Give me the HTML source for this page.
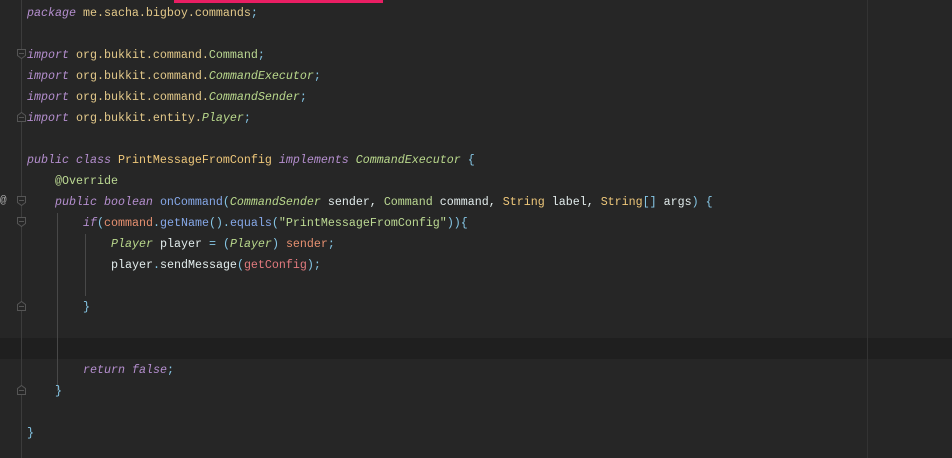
<!DOCTYPE html>
<html><head><style>
html,body{margin:0;padding:0;width:952px;height:458px;overflow:hidden;background:#262626;}
body{position:relative;font-family:"Liberation Mono",monospace;font-size:11.67px;color:#e2ecec;}
.l{position:absolute;left:27px;height:21px;line-height:21px;white-space:pre;margin-top:2px}
.k{color:#b58fcf;font-style:italic}
.c{color:#b9d88c;font-style:italic}
.p{color:#e3c98a}
.b{color:#86c7e6}
.m{color:#86a8e8}
.o{color:#e69070}
.s{color:#bcd993}
.r{color:#e27a7e}
.y{color:#eec77a}
.a{color:#bcd993}
.hl{position:absolute;left:0;top:338px;width:952px;height:21px;background:#1f1f1f}
.v{position:absolute;width:1px;background:#3c3c3c}
.f{position:absolute;left:17px;width:9px;height:10px}
</style></head><body>
<div style="position:absolute;left:174px;top:0;width:209px;height:3px;background:#e91e63"></div>
<div class="hl"></div>
<div class="v" style="left:21px;top:0;height:458px"></div>
<div class="v" style="left:867px;top:0;height:458px;background:#333"></div>
<div class="v" style="left:57px;top:213px;height:178px;background:#484848"></div>
<div class="v" style="left:85px;top:234px;height:62px;background:#484848"></div>
<svg class="f" style="top:49px" viewBox="0 0 9 10"><path d="M0.5 0.5H8.5V6.5L4.5 9.5L0.5 6.5Z M2 4.5H7" fill="#262626" stroke="#555"/></svg>
<svg class="f" style="top:112px" viewBox="0 0 9 10"><path d="M0.5 9.5H8.5V3.5L4.5 0.5L0.5 3.5Z M2 5.5H7" fill="#262626" stroke="#555"/></svg>
<svg class="f" style="top:196px" viewBox="0 0 9 10"><path d="M0.5 0.5H8.5V6.5L4.5 9.5L0.5 6.5Z M2 4.5H7" fill="#262626" stroke="#555"/></svg>
<svg class="f" style="top:217px" viewBox="0 0 9 10"><path d="M0.5 0.5H8.5V6.5L4.5 9.5L0.5 6.5Z M2 4.5H7" fill="#262626" stroke="#555"/></svg>
<svg class="f" style="top:301px" viewBox="0 0 9 10"><path d="M0.5 9.5H8.5V3.5L4.5 0.5L0.5 3.5Z M2 5.5H7" fill="#262626" stroke="#555"/></svg>
<svg class="f" style="top:385px" viewBox="0 0 9 10"><path d="M0.5 9.5H8.5V3.5L4.5 0.5L0.5 3.5Z M2 5.5H7" fill="#262626" stroke="#555"/></svg>
<div style="position:absolute;left:0;top:195px;color:#aaa;font-size:11px">@</div>
<div class="l" style="top:1px"><span class="k">package</span> <span class="p">me.sacha.bigboy.commands</span><span class="b">;</span></div>
<div class="l" style="top:43px"><span class="k">import</span> <span class="p">org.bukkit.command.</span><span class="s">Command</span><span class="b">;</span></div>
<div class="l" style="top:64px"><span class="k">import</span> <span class="p">org.bukkit.command.</span><span class="c">CommandExecutor</span><span class="b">;</span></div>
<div class="l" style="top:85px"><span class="k">import</span> <span class="p">org.bukkit.command.</span><span class="c">CommandSender</span><span class="b">;</span></div>
<div class="l" style="top:106px"><span class="k">import</span> <span class="p">org.bukkit.entity.</span><span class="c">Player</span><span class="b">;</span></div>
<div class="l" style="top:148px"><span class="k">public class</span> <span class="y">PrintMessageFromConfig</span> <span class="k">implements</span> <span class="c">CommandExecutor</span> <span class="b">{</span></div>
<div class="l" style="top:169px;left:55px"><span class="a">@Override</span></div>
<div class="l" style="top:190px;left:55px"><span class="k">public boolean</span> <span class="m">onCommand</span><span class="b">(</span><span class="c">CommandSender</span> sender, <span class="s">Command</span> command, <span class="y">String</span> label, <span class="y">String</span><span class="b">[]</span> args<span class="b">)</span> <span class="b">{</span></div>
<div class="l" style="top:211px;left:83px"><span class="k">if</span><span class="b">(</span><span class="o">command</span><span class="b">.</span><span class="m">getName</span><span class="b">().</span><span class="m">equals</span><span class="b">(</span><span class="s">"PrintMessageFromConfig"</span><span class="b">)){</span></div>
<div class="l" style="top:232px;left:111px"><span class="c">Player</span> player <span class="b">=</span> <span class="b">(</span><span class="c">Player</span><span class="b">)</span> <span class="o">sender</span><span class="b">;</span></div>
<div class="l" style="top:253px;left:111px">player<span class="b">.</span>sendMessage<span class="b">(</span><span class="r">getConfig</span><span class="b">);</span></div>
<div class="l" style="top:295px;left:83px"><span class="b">}</span></div>
<div class="l" style="top:358px;left:83px"><span class="k">return false</span><span class="b">;</span></div>
<div class="l" style="top:379px;left:55px"><span class="b">}</span></div>
<div class="l" style="top:421px"><span class="b">}</span></div>
</body></html>
